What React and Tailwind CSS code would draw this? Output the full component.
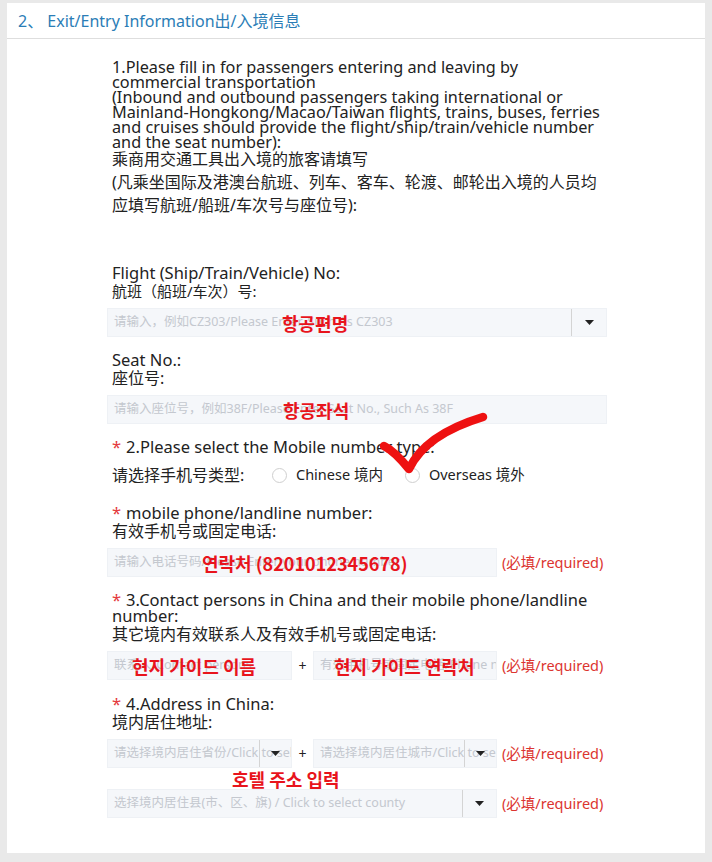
import React from "react";

const font = { fontFamily: '"Noto Sans", "Noto Sans CJK SC", sans-serif' };
const kr = { fontFamily: '"Noto Sans CJK KR", sans-serif' };

const Caret = () => (
  <svg width="9" height="5" viewBox="0 0 9 5">
    <path d="M0 0 L9 0 L4.5 5 Z" fill="#222" />
  </svg>
);

const Field = ({ width, placeholder, select, divider, children }) => (
  <div
    className="relative flex h-[29px] items-center overflow-hidden border border-[#eef1f5] bg-[#f5f7fa]"
    style={{ width }}
  >
    <div className="flex-1 overflow-hidden whitespace-nowrap pl-[6px] text-[12.5px] text-[#c4c8cf]">
      {placeholder}
    </div>
    {select && (
      <div
        className="absolute right-0 top-0 flex h-full items-center justify-center border-l border-[#d4d4d4]"
        style={{ width: divider }}
      >
        <Caret />
      </div>
    )}
    {children}
  </div>
);

const Overlay = ({ left, children }) => (
  <span
    className="absolute top-[50%] -translate-y-1/2 whitespace-nowrap text-[18px] font-bold leading-none text-[#e8141c]"
    style={{ ...kr, left }}
  >
    {children}
  </span>
);

const Required = () => (
  <span className="ml-[5px] whitespace-nowrap text-[14.5px] text-[#dc3530]">(必填/required)</span>
);

const Star = () => <span className="mr-[5px] text-[#e4393c]">*</span>;

const Radio = ({ label }) => (
  <label className="flex items-center gap-[9px]">
    <span className="h-[15px] w-[15px] rounded-full border border-[#cfcfcf] bg-white" />
    <span className="text-[14.5px]">{label}</span>
  </label>
);

export default function App() {
  return (
    <div className="relative h-[862px] bg-[#e9e9e9] px-[7px] pt-[3px] text-[#222]" style={font}>
      <div className="h-[850px] bg-white">
        <div className="flex h-[36px] items-center border-b border-[#dedede] pl-[11px] text-[16px] text-[#2b7db6]">
          2、 Exit/Entry Information出/入境信息
        </div>

        <div className="pl-[100px] pr-[99px]">
          <div className="mt-[21px] pl-[5px] text-[16.25px] leading-[15px] whitespace-nowrap">
            1.Please fill in for passengers entering and leaving by<br />
            commercial transportation<br />
            (Inbound and outbound passengers taking international or<br />
            Mainland-Hongkong/Macao/Taiwan flights, trains, buses, ferries<br />
            and cruises should provide the flight/ship/train/vehicle number<br />
            and the seat number):
          </div>
          <div className="mt-[0px] pl-[5px] text-[16px] leading-[18px]">乘商用交通工具出入境的旅客请填写</div>
          <div className="mt-[3px] pl-[5px] text-[16px] leading-[23px] whitespace-nowrap">
            (凡乘坐国际及港澳台航班、列车、客车、轮渡、邮轮出入境的人员均<br />
            应填写航班/船班/车次号与座位号):
          </div>

          <div className="mt-[47px] pl-[5px] text-[16.5px] leading-[18px]">
            <div>Flight (Ship/Train/Vehicle) No:</div>
            <div className="text-[15px]">航班（船班/车次）号:</div>
          </div>
          <div className="mt-[8px]">
            <Field width={500} placeholder="请输入，例如CZ303/Please Enter, Such As CZ303" select divider={35}>
              <Overlay left={174}>항공편명</Overlay>
            </Field>
          </div>

          <div className="mt-[14px] pl-[5px] text-[16.5px] leading-[18px]">
            <div>Seat No.:</div>
            <div className="text-[16px]">座位号:</div>
          </div>
          <div className="mt-[8px]">
            <Field width={500} placeholder="请输入座位号，例如38F/Please Enter Seat No., Such As 38F">
              <Overlay left={175}>항공좌석</Overlay>
            </Field>
          </div>

          <div className="mt-[14px] pl-[5px] text-[16.5px] leading-[18px]">
            <Star />2.Please select the Mobile number type:
          </div>
          <div className="mt-[7px] flex h-[24px] items-center pl-[5px] text-[16px]">
            <span className="w-[160px]">请选择手机号类型:</span>
            <Radio label="Chinese 境内" />
            <span className="w-[22px]" />
            <Radio label="Overseas 境外" />
          </div>

          <div className="mt-[17px] pl-[5px] text-[16.5px] leading-[18px]">
            <div><Star />mobile phone/landline number:</div>
            <div className="text-[16px]">有效手机号或固定电话:</div>
          </div>
          <div className="mt-[8px] flex items-center">
            <Field width={390} placeholder="请输入电话号码/Please Enter your phone number">
              <Overlay left={94}>연락처 (8201012345678)</Overlay>
            </Field>
            <Required />
          </div>

          <div className="mt-[15px] pl-[5px] text-[16.5px] leading-[16px]">
            <div><Star />3.Contact persons in China and their mobile phone/landline</div>
            <div>number:</div>
            <div className="text-[16px] leading-[20px]">其它境内有效联系人及有效手机号或固定电话:</div>
          </div>
          <div className="mt-[7px] flex items-center">
            <Field width={185} placeholder="联系人/Contact persons">
              <Overlay left={24}>현지 가이드 이름</Overlay>
            </Field>
            <span className="w-[21px] text-center text-[14px]">+</span>
            <Field width={184} placeholder="有效手机号或固定电话/Phone number">
              <Overlay left={20}>현지 가이드 연락처</Overlay>
            </Field>
            <Required />
          </div>

          <div className="mt-[15px] pl-[5px] text-[16.5px] leading-[18px]">
            <div><Star />4.Address in China:</div>
            <div className="text-[16px]">境内居住地址:</div>
          </div>
          <div className="mt-[8px] flex items-center">
            <Field width={185} placeholder="请选择境内居住省份/Click to select" select divider={32} />
            <span className="w-[21px] text-center text-[14px]">+</span>
            <Field width={184} placeholder="请选择境内居住城市/Click to select" select divider={32} />
            <Required />
          </div>
          <div className="flex h-[21px] items-center pl-[125px]">
            <span className="text-[18px] font-bold leading-none text-[#e8141c]" style={kr}>호텔 주소 입력</span>
          </div>
          <div className="flex items-center">
            <Field width={390} placeholder="选择境内居住县(市、区、旗) / Click to select county" select divider={34} />
            <Required />
          </div>
        </div>
      </div>

      <svg className="pointer-events-none absolute left-[378px] top-[410px]" width="115" height="70" viewBox="0 0 115 70">
        <path
          d="M6 36 C14 40 22 48 31 59 C40 40 62 20 105 7"
          fill="none"
          stroke="#ee1111"
          strokeWidth="8.5"
          strokeLinecap="round"
          strokeLinejoin="round"
        />
      </svg>
    </div>
  );
}
